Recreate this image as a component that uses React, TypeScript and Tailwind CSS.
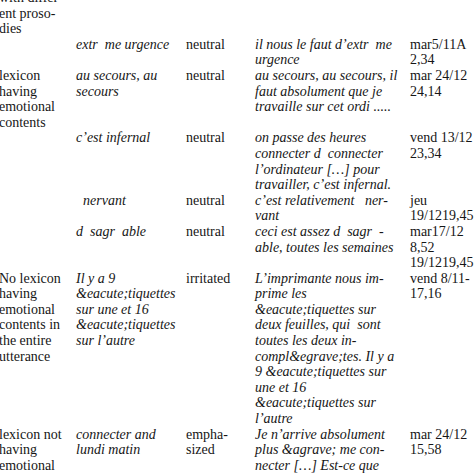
import React from 'react';

type Row = { cells: string[][] };

// rows of the results table, one entry per line so the breaks match the print
const rows: Row[] = [
  { cells: [['with differ', 'ent proso-', 'dies'], [], [], [], []] },
  {
    cells: [
      [],
      ['extr  me urgence'],
      ['neutral'],
      ['il nous le faut d’extr  me', 'urgence'],
      ['mar5/11A', '2,34'],
    ],
  },
  {
    cells: [
      ['lexicon', 'having', 'emotional', 'contents'],
      ['au secours, au', 'secours'],
      ['neutral'],
      ['au secours, au secours, il', 'faut absolument que je', 'travaille sur cet ordi .....'],
      ['mar 24/12', '24,14'],
    ],
  },
  {
    cells: [
      [],
      ['c’est infernal'],
      ['neutral'],
      ['on passe des heures', 'connecter d  connecter', 'l’ordinateur […] pour', 'travailler, c’est infernal.'],
      ['vend 13/12', '23,34'],
    ],
  },
  {
    cells: [
      [],
      ['  nervant'],
      ['neutral'],
      ['c’est relativement   ner-', 'vant'],
      ['jeu', '19/1219,45'],
    ],
  },
  {
    cells: [
      [],
      ['d  sagr  able'],
      ['neutral'],
      ['ceci est assez d  sagr  -', 'able, toutes les semaines'],
      ['mar17/12', '8,52', '19/1219,45'],
    ],
  },
  {
    cells: [
      ['No lexicon', 'having', 'emotional', 'contents in', 'the entire', 'utterance'],
      ['Il y a 9', '&eacute;tiquettes', 'sur une et 16', '&eacute;tiquettes', 'sur l’autre'],
      ['irritated'],
      [
        'L’imprimante nous im-',
        'prime les',
        '&eacute;tiquettes sur',
        'deux feuilles, qui  sont',
        'toutes les deux in-',
        'compl&egrave;tes. Il y a',
        '9 &eacute;tiquettes sur',
        'une et 16',
        '&eacute;tiquettes sur',
        'l’autre',
      ],
      ['vend 8/11-', '17,16'],
    ],
  },
  {
    cells: [
      ['lexicon not', 'having', 'emotional'],
      ['connecter and', 'lundi matin'],
      ['empha-', 'sized'],
      ['Je n’arrive absolument', 'plus &agrave; me con-', 'necter […] Est-ce que'],
      ['mar 24/12', '15,58'],
    ],
  },
];

const italicCols = [1, 3];

const App = () => {
  return (
    <div className="w-[474px] h-[474px] overflow-hidden bg-white">
      <div
        className="-ml-px -mt-[10px] text-[14px] leading-[15.6px] text-[#161616]"
        style={{ fontFamily: '"Liberation Serif", "Times New Roman", serif' }}
      >
        {rows.map((row, i) => (
          <div key={i} className="grid grid-cols-[77px_110px_69px_155px_1fr]">
            {row.cells.map((lines, c) => (
              <div
                key={c}
                className={`whitespace-pre ${italicCols.includes(c) ? 'italic' : ''}`}
              >
                {lines.map((line, k) => (
                  <div key={k}>{line}</div>
                ))}
              </div>
            ))}
          </div>
        ))}
      </div>
    </div>
  );
};

export default App;
